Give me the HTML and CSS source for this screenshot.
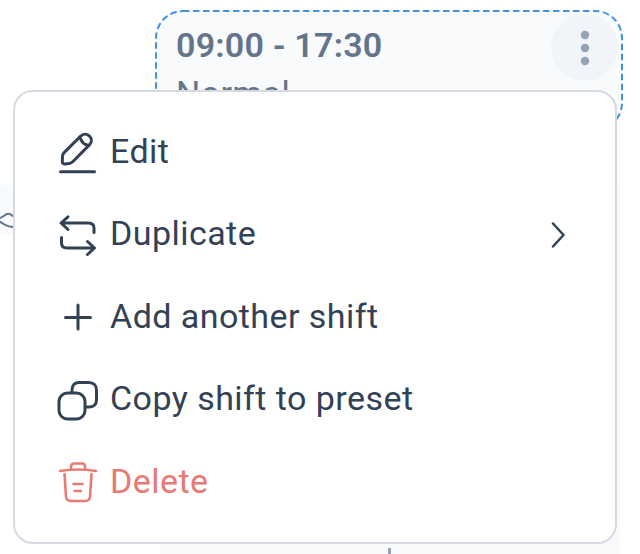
FILE: index.html
```html
<!DOCTYPE html>
<html lang="en">
<head>
<meta charset="utf-8">
<title>Shift menu</title>
<link rel="stylesheet" href="styles.css">
</head>
<body>
<div class="page">
  <div class="shift-card">
    <svg class="dash-outline" width="468" height="121" viewBox="0 0 468 121"><rect x="1" y="1" width="466" height="119" rx="27"/></svg>
    <div class="shift-text">
      <div class="shift-time">09:00 - 17:30</div>
      <div class="shift-type">Normal</div>
    </div>
    <button class="more-btn" aria-label="More">
      <svg width="10" height="36" viewBox="0 0 10 36"><circle cx="5" cy="5" r="4.2"/><circle cx="5" cy="18" r="4.2"/><circle cx="5" cy="31" r="4.2"/></svg>
    </button>
  </div>
  <div class="back-row">
    <div class="left-strip"><svg width="14" height="50" viewBox="0 0 14 50"><path d="M-1 33c4 0 5-3 8-4 3-1 5 1 7 3M-1 36c4 3 9 6 15 6" fill="none" stroke="#64748b" stroke-width="2"/></svg></div>
    <div class="back-panel"><span class="tick"></span></div>
  </div>
</div>

<div class="menu">
  <div class="menu-item">
    <svg class="icon" viewBox="0 0 38 38"><path d="M3.500 23.500c0-1.500.6-2.800 1.600-3.900L21.500 3.200c2.600-2.700 6.300-2.700 8.900-.2 2.600 2.600 2.600 6.300 0 8.900L14 28.500c-1 1-2.300 1.700-3.800 1.900l-4.200.6c-1.600.2-2.800-.9-2.700-2.500Z"/><path d="M21 4c.8 4 4 7.500 8.500 8.500"/><path d="M1.500 38.700h34"/></svg>
    <span class="label">Edit</span>
  </div>
  <div class="menu-item">
    <svg class="icon" viewBox="0 0 38 38"><path d="M9 .8 2 7l7 6.500M2.500 7h27c3.500 0 5.500 2 5.500 5v4.500"/><path d="M28.500 25.500 35.500 32l-7 6.500M35 32H8c-3.500 0-5.500-2-5.500-5v-5.500"/></svg>
    <span class="label">Duplicate</span>
    <svg class="chevron" width="14" height="26" viewBox="0 0 14 26"><path d="M2 1.500 12.500 13 2 24.500"/></svg>
  </div>
  <div class="menu-item">
    <svg class="icon" viewBox="0 0 38 38"><path d="M19 7v24M6.500 19.500h25"/></svg>
    <span class="label">Add another shift</span>
  </div>
  <div class="menu-item">
    <svg class="icon" viewBox="0 0 38 38"><rect x="0" y="12" width="26" height="26" rx="8.500"/><path d="M13 11V9c0-5 3-7.500 7-7.500h10c4.500 0 7.500 3 7.500 7.500v10c0 4.500-3 7-7.500 7h-3.500"/></svg>
    <span class="label">Copy shift to preset</span>
  </div>
  <div class="menu-item danger">
    <svg class="icon icon-thin" viewBox="0 0 38 38"><path d="M1 8c12-2 24-2 36 0"/><path d="M12 5.500V3.500C12 1.500 13.500.5 15 .5h8c1.500 0 3 1 3 3v2"/><path d="M5.500 11l1.500 22.500c.2 3 2 4.500 5 4.500h14c3 0 4.800-1.500 5-4.500l1.500-22.500"/><path d="M14.500 21h9M15.500 28h6.500"/></svg>
    <span class="label">Delete</span>
  </div>
</div>
</body>
</html>
```
FILE: styles.css
```css
* {
  box-sizing: border-box;
}

html,
body {
  margin: 0;
  height: 100%;
  background: #ffffff;
  overflow: hidden;
}

body {
  font-family: Roboto, "Liberation Sans", sans-serif;
}

.page {
  display: flex;
  flex-direction: column;
  height: 554px;
  padding-top: 10px;
}

.shift-card {
  position: relative;
  display: flex;
  justify-content: space-between;
  flex: none;
  width: 468px;
  height: 121px;
  margin-left: 155px;
  padding: 4px 5px 0 21px;
  background: #f8fafc;
  border-radius: 28px;
}

.dash-outline {
  position: absolute;
  left: 0;
  top: 0;
  fill: none;
  stroke: #4292e6;
  stroke-width: 2;
  stroke-dasharray: 6.500 3.500;
}

.shift-text {
  padding-top: 10px;
}

.shift-time {
  font-size: 34px;
  line-height: 42px;
  font-weight: 600;
  letter-spacing: 0.25px;
  color: #64748b;
}

.shift-type {
  margin-top: 6px;
  font-size: 34px;
  line-height: 42px;
  font-weight: 400;
  letter-spacing: 0.4px;
  color: #64748b;
}

.more-btn {
  position: relative;
  display: flex;
  align-items: center;
  justify-content: center;
  width: 67px;
  height: 67px;
  padding: 0;
  border: 0;
  border-radius: 50%;
  background: #f1f5f9;
}

.more-btn svg {
  fill: #94a3b8;
}

.back-row {
  display: flex;
  flex: 1;
  margin-top: 54px;
}

.left-strip {
  width: 14px;
  height: 50px;
  background: #f8fafc;
}

.back-panel {
  display: flex;
  align-items: flex-end;
  justify-content: center;
  width: 460px;
  margin-left: 146px;
  background: #f8fafc;
}

.tick {
  width: 3px;
  height: 6px;
  margin-right: 2px;
  background: #94a3b8;
}

.menu {
  position: absolute;
  left: 13px;
  top: 90px;
  width: 604px;
  height: 454px;
  padding: 19px 50px 0 44px;
  display: flex;
  flex-direction: column;
  background: #ffffff;
  border: 2px solid #d5dae3;
  border-radius: 20px;
}

.menu-item {
  display: flex;
  align-items: center;
  gap: 13px;
  height: 82.500px;
  font-size: 34px;
  letter-spacing: 0.45px;
  color: #334155;
}

.icon {
  flex: none;
  width: 38px;
  height: 38px;
  overflow: visible;
  fill: none;
  stroke: currentColor;
  stroke-width: 3;
  stroke-linecap: round;
  stroke-linejoin: round;
}

.icon-thin {
  stroke-width: 2.600;
}

.label {
  flex: 1;
  line-height: 40px;
  margin-top: -3px;
}

.chevron {
  fill: none;
  stroke: currentColor;
  stroke-width: 2.500;
  stroke-linecap: round;
  stroke-linejoin: round;
}

.danger {
  color: #e97a73;
}
```
